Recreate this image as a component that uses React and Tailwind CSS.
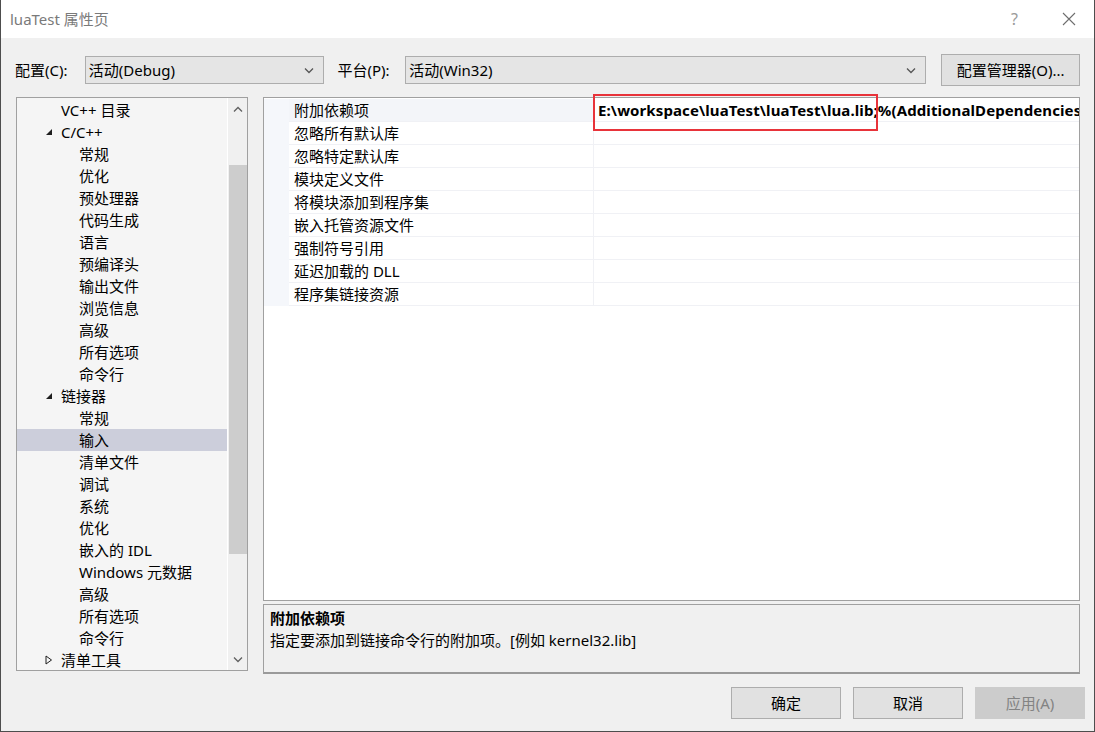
// Property pages dialog — luaTest 属性页, 链接器 > 输入 selected.

const TREE = [
  { label: "VC++ 目录", level: 1 },
  { label: "C/C++", level: 1, open: true },
  { label: "常规", level: 2 },
  { label: "优化", level: 2 },
  { label: "预处理器", level: 2 },
  { label: "代码生成", level: 2 },
  { label: "语言", level: 2 },
  { label: "预编译头", level: 2 },
  { label: "输出文件", level: 2 },
  { label: "浏览信息", level: 2 },
  { label: "高级", level: 2 },
  { label: "所有选项", level: 2 },
  { label: "命令行", level: 2 },
  { label: "链接器", level: 1, open: true },
  { label: "常规", level: 2 },
  { label: "输入", level: 2, selected: true },
  { label: "清单文件", level: 2 },
  { label: "调试", level: 2 },
  { label: "系统", level: 2 },
  { label: "优化", level: 2 },
  { label: "嵌入的 IDL", level: 2 },
  { label: "Windows 元数据", level: 2 },
  { label: "高级", level: 2 },
  { label: "所有选项", level: 2 },
  { label: "命令行", level: 2 },
  { label: "清单工具", level: 1, open: false },
];

const PROPS = [
  { name: "附加依赖项", value: "E:\\workspace\\luaTest\\luaTest\\lua.lib;%(AdditionalDependencies)" },
  { name: "忽略所有默认库" },
  { name: "忽略特定默认库" },
  { name: "模块定义文件" },
  { name: "将模块添加到程序集" },
  { name: "嵌入托管资源文件" },
  { name: "强制符号引用" },
  { name: "延迟加载的 DLL" },
  { name: "程序集链接资源" },
];

function Chevron({ dir = "down", className = "" }) {
  const d = dir === "down" ? "M1 1.5l4 4 4-4" : "M1 5.5l4-4 4 4";
  return (
    <svg width="10" height="7" viewBox="0 0 10 7" className={className}>
      <path d={d} fill="none" stroke="currentColor" strokeWidth="1.3" />
    </svg>
  );
}

function Expander({ open }) {
  if (open === undefined) return <span className="w-[16px]" />;
  return (
    <span className="w-[16px] flex items-center">
      {open ? (
        <svg width="8" height="8" viewBox="0 0 8 8">
          <path d="M7 1v6H1z" fill="#1e1e1e" />
        </svg>
      ) : (
        <svg width="8" height="10" viewBox="0 0 8 10">
          <path d="M1 1l5.5 4L1 9z" fill="none" stroke="#1e1e1e" strokeWidth="1" />
        </svg>
      )}
    </span>
  );
}

function Select({ text, className }) {
  return (
    <div className={`h-[28px] flex items-center justify-between bg-[#e5e5e5] border border-[#adadad] pl-[3px] pr-[9px] ${className}`}>
      <span>{text}</span>
      <Chevron className="text-[#555]" />
    </div>
  );
}

function Button({ children, disabled, className = "" }) {
  return (
    <div
      className={`h-[32px] w-[110px] flex items-center justify-center border ${
        disabled ? "bg-[#cccccc] border-[#cccccc] text-[#838383]" : "bg-[#e1e1e1] border-[#adadad] text-black"
      } ${className}`}
    >
      {children}
    </div>
  );
}

export default function App() {
  return (
    <div className="w-[1095px] h-[732px] flex flex-col bg-[#f0f0f0] border-x border-b border-[#4d4d4d] text-[15px] text-black font-['Noto_Sans','Noto_Sans_CJK_SC',sans-serif] overflow-hidden">
      {/* title bar */}
      <div className="h-[38px] shrink-0 bg-white flex items-center justify-between pl-[9px] pr-[18px]">
        <span className="text-[#7a7a7a]">luaTest 属性页</span>
        <div className="flex items-center gap-[44px] text-[#9a9a9a]">
          <span className="text-[16px]">?</span>
          <svg width="14" height="14" viewBox="0 0 14 14">
            <path d="M1 1l12 12M13 1L1 13" stroke="#6e6e6e" strokeWidth="1.1" />
          </svg>
        </div>
      </div>

      {/* configuration row */}
      <div className="flex items-center pl-[14px] pr-[14px] mt-[16px] h-[32px]">
        <span className="w-[70px]">配置(C):</span>
        <Select text="活动(Debug)" className="w-[240px]" />
        <span className="ml-[13px] w-[68px]">平台(P):</span>
        <Select text="活动(Win32)" className="w-[522px]" />
        <Button className="ml-[15px] w-[139px]">配置管理器(O)...</Button>
      </div>

      {/* content */}
      <div className="flex mt-[11px] pl-[15px] pr-[14px] gap-[15px]">
        {/* tree */}
        <div className="w-[232px] shrink-0 h-[574px] border border-[#a0a0a0] bg-[#f5f5f5] flex">
          <div className="flex-1 pt-[1px]">
            {TREE.map((item, i) => (
              <div
                key={i}
                className={`h-[22px] flex items-center ${item.selected ? "bg-[#cccedb]" : ""} ${
                  item.level === 1 ? "pl-[28px]" : "pl-[62px]"
                }`}
              >
                {item.level === 1 && <Expander open={item.open} />}
                <span>{item.label}</span>
              </div>
            ))}
          </div>
          <div className="w-[20px] bg-[#f0f0f0] flex flex-col items-center border-l border-white">
            <div className="h-[22px] flex items-center justify-center text-[#606060]">
              <Chevron dir="up" />
            </div>
            <div className="flex-1 w-full pt-[45px]">
              <div className="w-[18px] ml-[1px] h-[389px] bg-[#cdcdcd]" />
            </div>
            <div className="h-[22px] flex items-center justify-center text-[#606060]">
              <Chevron dir="down" />
            </div>
          </div>
        </div>

        {/* right column */}
        <div className="flex-1 min-w-0 flex flex-col gap-[3px]">
          <div className="relative h-[504px] border border-[#a0a0a0] bg-white">
            <div className="pt-[1px]">
              {PROPS.map((p, i) => (
                <div key={i} className="h-[23px] flex">
                  <div className="w-[25px] shrink-0 bg-[#f5f7fb]" />
                  <div
                    className={`w-[305px] shrink-0 flex items-center pl-[5px] border-b border-r border-[#f0f1f5] ${
                      i === 0 ? "bg-[#f3f5f9]" : ""
                    }`}
                  >
                    {p.name}
                  </div>
                  <div className="flex-1 min-w-0 flex items-center pl-[4px] border-b border-[#f0f1f5] overflow-hidden whitespace-nowrap font-bold tracking-[0.1px]">
                    {p.value || ""}
                  </div>
                </div>
              ))}
            </div>
            {/* annotation box */}
            <div className="absolute left-[329px] top-[-4px] w-[285px] h-[37px] border-2 border-[#e8333a]" />
          </div>

          <div className="h-[70px] border border-[#a0a0a0] border-b-2 border-b-[#9a9a9a] bg-[#f0f0f0] px-[6px] pt-[2px] leading-[22px]">
            <div className="font-bold">附加依赖项</div>
            <div>指定要添加到链接命令行的附加项。[例如 kernel32.lib]</div>
          </div>
        </div>
      </div>

      {/* buttons */}
      <div className="flex justify-end gap-[12px] pr-[9px] mt-[13px]">
        <Button>确定</Button>
        <Button>取消</Button>
        <Button disabled>应用(A)</Button>
      </div>
    </div>
  );
}
